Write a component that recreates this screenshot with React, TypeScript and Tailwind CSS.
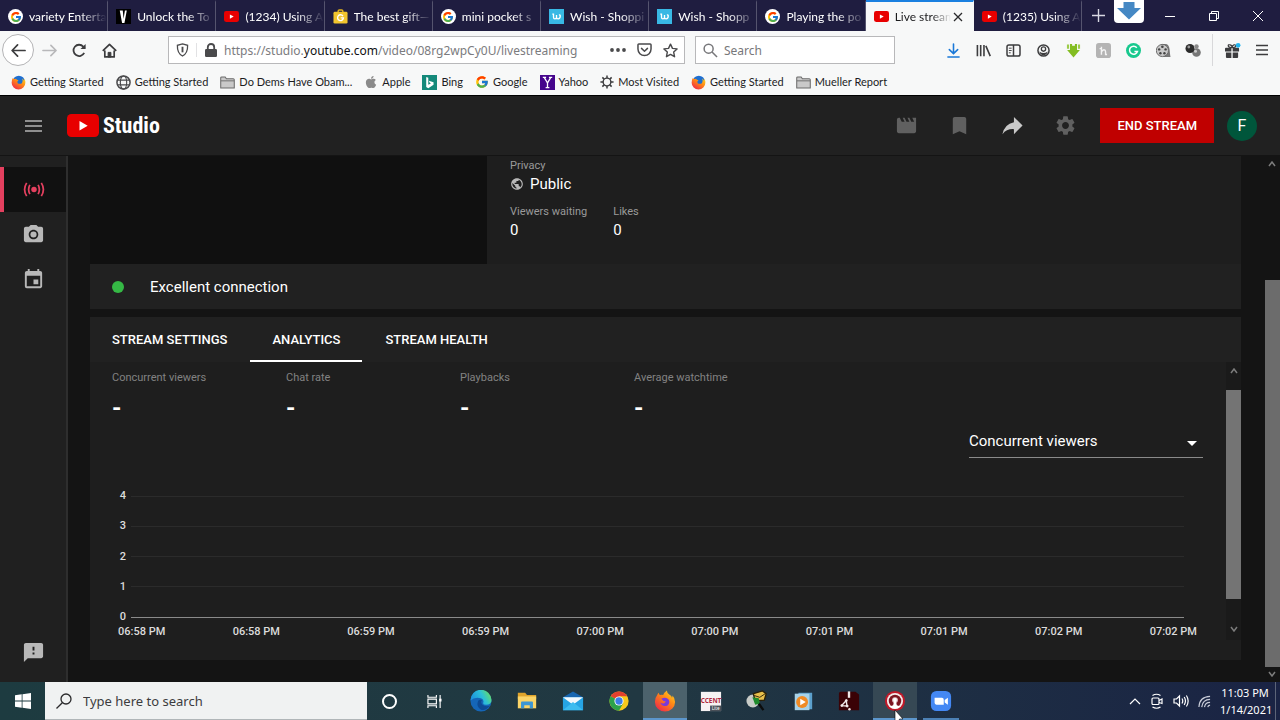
import { useState } from 'react'
import type { ReactNode } from 'react'
import { FcGoogle } from 'react-icons/fc'
import { FaApple } from 'react-icons/fa'
import {
  MdMovie, MdBookmark, MdSettings, MdPhotoCamera, MdEvent, MdFeedback, MdPublic,
} from 'react-icons/md'

/* ---------- small logos ---------- */

function YouTubeIcon({ className }: { className?: string }) {
  return (
    <svg viewBox="0 0 32 23" className={className} aria-hidden="true">
      <rect width="32" height="23" rx="4.500" fill="#e80000" />
      <path d="M12.500 7v9.400l8.200-4.700z" fill="#fff" />
    </svg>
  )
}

function GoogleFavicon() {
  return (
    <span className="flex size-[15px] items-center justify-center rounded-full bg-white">
      <FcGoogle size={12} />
    </span>
  )
}

function VarietyIcon() {
  return (
    <svg viewBox="0 0 16 16" className="size-[15px]" aria-hidden="true">
      <rect width="16" height="16" fill="#000" />
      <path d="M4 1.500h3.200l.9 9L9.500 1.500h2L9 15H6.500z" fill="#fff" />
    </svg>
  )
}

function ShoppingIcon() {
  return (
    <svg viewBox="0 0 16 16" className="size-[15px]" aria-hidden="true">
      <path d="M5.500 4V2.200Q5.500 1 6.800 1h2.400q1.300 0 1.300 1.200V4" fill="none" stroke="#e2b41c" strokeWidth="1.500" />
      <rect x=".5" y="3" width="15" height="12.500" rx="1.500" fill="#f2c52e" />
      <path d="M10.600 7.600A3.100 3.100 0 1 0 11.100 9.500H8.200" fill="none" stroke="#fff" strokeWidth="1.500" />
    </svg>
  )
}

function WishIcon() {
  return (
    <svg viewBox="0 0 16 16" className="size-[15px]" aria-hidden="true">
      <rect width="16" height="16" fill="#38b8e4" />
      <path d="M3.500 5.500h1.300v3.300q0 1.700 1.500 1.700T8 8.800V6.500v2.300q0 1.700 1.700 1.700 2.300 0 2.300-3Q12 6 10.600 6.500" fill="none" stroke="#fff" strokeWidth="1.400" />
    </svg>
  )
}

function FirefoxIcon({ className, modern }: { className?: string; modern?: boolean }) {
  return (
    <svg viewBox="0 0 24 24" className={className} aria-hidden="true">
      <defs>
        <linearGradient id="fx" x1="1" y1="0" x2="0.200" y2="1">
          <stop offset="0" stopColor="#ffe226" />
          <stop offset="0.450" stopColor="#ff8a16" />
          <stop offset="1" stopColor="#f0264a" />
        </linearGradient>
      </defs>
      {!modern && <circle cx="12.500" cy="10.500" r="9.500" fill="#1f6fd0" />}
      {modern ? (
        <path
          d="M3.500 5.500Q4 3.800 5.200 3q.1 1.600 1.200 2.500Q8.500 4.800 10 5.500q1-2.800 4-5 .2 3 3 4.800 2.400 1.300 2.600 3.200.7-.8.600-2.500Q23 9 23 13a11 10.500 0 0 1-22 0Q1 8.500 3.500 5.500z"
          fill="url(#fx)"
        />
      ) : (
        <path
          d="M2.500 5l2.800 1.500Q8 5.500 9.500 7.500L12 8.500l-2 2.300 1 2.700q3.500 1.500 6.500-.5 2-3 .5-7.500Q20 7 20.500 9q.8-1.500.5-3.500 2 3 2 7a11 10.500 0 0 1-22 0Q1 8 2.500 5z"
          fill="url(#fx)"
        />
      )}
      {modern && (
        <path
          d="M8 9.500q3-1.800 5.500-.8 3.500 1.300 3.200 4.800-.8 4-5 4-3.700-.3-4.700-3.500 2.500 1.500 4.500.2l1.500-1.600q-2.800.2-5-3.100z"
          fill="#7a3ad8"
        />
      )}
    </svg>
  )
}

function GlobeIcon() {
  return (
    <svg viewBox="0 0 16 16" className="size-[15px]" fill="none" stroke="#4a4a4c" strokeWidth="1.200" aria-hidden="true">
      <circle cx="8" cy="8" r="7" strokeWidth="1.600" />
      <ellipse cx="8" cy="8" rx="3.400" ry="7" />
      <path d="M1.500 5.500h13M1.500 10.500h13" />
    </svg>
  )
}

function FolderIcon() {
  return (
    <svg viewBox="0 0 16 14" className="h-[13px] w-[15px]" aria-hidden="true">
      <path d="M.7 13V2.200Q.7 1 1.800 1h3.700l1.300 2h7.400q1.100 0 1.100 1.100V13z" fill="#c9c9c9" stroke="#6b6b6b" strokeWidth="1.100" />
      <path d="M1 5.200h14" stroke="#6b6b6b" />
    </svg>
  )
}

function BingIcon() {
  return (
    <svg viewBox="0 0 16 16" className="size-[15px]" aria-hidden="true">
      <rect width="16" height="16" fill="#14897a" />
      <path d="M4.500 2l2.200.8v7.700l2.800-1.500-1.300-.8-.9-2.200 5 1.800v2.600L6.700 14l-2.200-1.300z" fill="#fff" />
    </svg>
  )
}

function YahooIcon() {
  return (
    <svg viewBox="0 0 16 16" className="size-[15px]" aria-hidden="true">
      <rect width="16" height="16" fill="#45058c" />
      <path d="M3 2.500h3.500M9.500 2.500H13M4.500 2.500L8 8.500l3.500-6M8 8.500v5M6 13.500h4" fill="none" stroke="#fff" strokeWidth="1.400" />
    </svg>
  )
}

function SunGearIcon() {
  return (
    <svg viewBox="0 0 16 16" className="size-[14px]" fill="none" stroke="#3c3c3e" aria-hidden="true">
      <circle cx="8" cy="8" r="4.400" strokeWidth="1.600" />
      <path d="M8 .5v3M8 12.500v3M.5 8h3M12.500 8h3M2.700 2.700l2 2M11.300 11.300l2 2M13.300 2.700l-2 2M4.700 11.300l-2 2" strokeWidth="1.700" />
    </svg>
  )
}

/* ---------- browser chrome ---------- */

interface Tab {
  icon: ReactNode
  title: string
}

const youtubeFavicon = <YouTubeIcon className="h-[11px] w-[15px]" />

const browserTabs: Tab[] = [
  { icon: <GoogleFavicon />, title: 'variety Enterta' },
  { icon: <VarietyIcon />,   title: 'Unlock the To' },
  { icon: youtubeFavicon,    title: '(1234) Using A' },
  { icon: <ShoppingIcon />,  title: 'The best gift—' },
  { icon: <GoogleFavicon />, title: 'mini pocket s' },
  { icon: <WishIcon />,      title: 'Wish - Shoppi' },
  { icon: <WishIcon />,      title: 'Wish - Shopp' },
  { icon: <GoogleFavicon />, title: 'Playing the po' },
  { icon: youtubeFavicon,    title: 'Live stream' },
  { icon: youtubeFavicon,    title: '(1235) Using A' },
]

function TabStrip() {
  const active = 8
  return (
    <div className="flex h-[31px] bg-[#1f1d40] text-white">
      <div className="flex min-w-0 flex-1">
        {browserTabs.map((tab, i) => (
          <div
            key={i}
            className={`flex min-w-0 flex-1 items-center gap-1.5 border-r pl-2 ${
              i === active
                ? 'border-t-2 border-t-[#1a80e0] border-r-transparent bg-[#f7f8f8] text-[#1c1c1e]'
                : 'border-t-2 border-t-transparent border-r-[#55546e]'
            }`}
          >
            <span className="shrink-0">{tab.icon}</span>
            <button className="min-w-0 flex-1 text-left text-[12px] leading-4 whitespace-nowrap [mask-image:linear-gradient(to_right,#000_65%,transparent)]">
              {tab.title}
            </button>
            {i === active && (
              <button aria-label="Close tab" className="mr-2.5 -ml-1 shrink-0">
                <svg viewBox="0 0 10 10" className="size-[10px]" stroke="#2a2a2c" strokeWidth="1.300">
                  <path d="M1 1l8 8M9 1L1 9" />
                </svg>
              </button>
            )}
          </div>
        ))}
      </div>
      <div className="flex w-[198px] shrink-0">
        <button aria-label="New tab" className="flex w-8 items-center justify-center">
          <svg viewBox="0 0 14 14" className="size-[13px]" stroke="#d8d8e2" strokeWidth="1.500">
            <path d="M7 0v14M0 7h14" />
          </svg>
        </button>
        <button aria-label="Download video" className="flex h-[23px] w-[30px] items-start justify-center rounded-b bg-white">
          <svg viewBox="0 0 24 20" className="h-[20px] w-[24px]">
            <path d="M6.500 2h11v6H24L12 19.500 0 8h6.500z" fill="#4588c4" />
          </svg>
        </button>
        <div className="flex flex-1 items-center justify-around pl-1">
          <button aria-label="Minimize">
            <svg viewBox="0 0 10 10" className="size-[10px]" stroke="#fff"><path d="M0 5.500h10" /></svg>
          </button>
          <button aria-label="Restore">
            <svg viewBox="0 0 10 10" className="size-[10px]" fill="none" stroke="#fff">
              <path d="M.5 2.500h7v7h-7zM2.500 2.500v-2h7v7h-2" />
            </svg>
          </button>
          <button aria-label="Close window">
            <svg viewBox="0 0 10 10" className="size-[10px]" stroke="#fff"><path d="M0 0l10 10M10 0L0 10" /></svg>
          </button>
        </div>
      </div>
    </div>
  )
}

function ToolbarButton({ label, children }: { label: string; children: ReactNode }) {
  return (
    <button aria-label={label} className="flex w-[30px] shrink-0 items-center justify-center">
      {children}
    </button>
  )
}

function NavToolbar() {
  return (
    <div className="flex h-[38px] items-center bg-[#f7f8f8] px-0.5 font-['Noto_Sans',sans-serif] text-[#3c3c3e]">
      <button aria-label="Back" className="flex size-8 shrink-0 items-center justify-center rounded-full border border-[#b4b4b6] bg-white">
        <svg viewBox="0 0 16 16" className="size-[15px]" fill="none" stroke="currentColor" strokeWidth="1.800" strokeLinecap="round" strokeLinejoin="round">
          <path d="M15 8H1.500M7 2L1.200 8 7 14" />
        </svg>
      </button>
      <ToolbarButton label="Forward">
        <svg viewBox="0 0 16 16" className="size-[15px]" fill="none" stroke="#b8b8ba" strokeWidth="1.700" strokeLinecap="round" strokeLinejoin="round">
          <path d="M1 8h13.500M9.500 2.500L15 8l-5.500 5.500" />
        </svg>
      </ToolbarButton>
      <ToolbarButton label="Reload">
        <svg viewBox="0 0 16 16" className="size-[15px]" fill="none" stroke="currentColor" strokeWidth="1.900">
          <path d="M13 10.500A6 6 0 1 1 12 3.800l1.500 1.500" />
          <path d="M14.500 1v5.500H9z" fill="currentColor" stroke="none" />
        </svg>
      </ToolbarButton>
      <ToolbarButton label="Home">
        <svg viewBox="0 0 16 16" className="size-[15px]" fill="none" stroke="currentColor" strokeWidth="1.800" strokeLinejoin="round">
          <path d="M.8 8.500L8 1.500l7.200 7M3 8v6.800h10V8" />
          <path d="M6.500 15v-5h3v5z" fill="currentColor" strokeWidth="1" />
        </svg>
      </ToolbarButton>

      <div className="ml-11 flex h-7 flex-1 items-center border border-[#b8b8ba] bg-white pr-1.5">
        <button aria-label="Tracking protection" className="flex w-7 justify-center border-r border-[#e2e2e4]">
          <svg viewBox="0 0 14 15" className="h-[14px] w-[13px]" fill="none" stroke="#4a4a4c" strokeWidth="1.400">
            <path d="M7 1l5.500 1.500q.3 8.500-5.500 11.500-5.800-3-5.500-11.500z" />
            <path d="M7 4v6" strokeWidth="2" />
          </svg>
        </button>
        <button aria-label="Site information" className="flex w-[27px] justify-center">
          <svg viewBox="0 0 12 14" className="h-[14px] w-[12px]">
            <rect y="6" width="12" height="8" rx="1.200" fill="#4a4a4c" />
            <path d="M2.800 7V4.200a3.200 3.200 0 0 1 6.400 0V7" fill="none" stroke="#4a4a4c" strokeWidth="1.800" />
          </svg>
        </button>
        <div role="textbox" aria-label="Address" tabIndex={0} className="min-w-0 flex-1 truncate pt-0.5 text-[12px] text-[#7b7b7e]">
          https://studio.<span className="text-[#111113]">youtube.com</span>/video/08rg2wpCy0U/livestreaming
        </div>
        <div className="flex items-center gap-[11px]">
          <button aria-label="Page actions">
            <svg viewBox="0 0 16 4" className="h-[4px] w-[16px]" fill="#4a4a4c">
              <circle cx="2" cy="2" r="1.900" /><circle cx="8" cy="2" r="1.900" /><circle cx="14" cy="2" r="1.900" />
            </svg>
          </button>
          <button aria-label="Save to Pocket">
            <svg viewBox="0 0 16 15" className="h-[14px] w-[15px]" fill="none" stroke="#4a4a4c" strokeWidth="1.600" strokeLinecap="round" strokeLinejoin="round">
              <path d="M2 1h12q1 0 1 1v4.500a7 7 0 0 1-14 0V2q0-1 1-1z" />
              <path d="M4.800 5.800L8 8.800l3.200-3" />
            </svg>
          </button>
          <button aria-label="Bookmark this page">
            <svg viewBox="0 0 16 16" className="size-[15px]" fill="none" stroke="#4a4a4c" strokeWidth="1.500" strokeLinejoin="round">
              <path d="M8 1.200l2.100 4.500 4.900.6-3.600 3.400.9 4.900L8 12.200l-4.300 2.400.9-4.900L1 6.300l4.900-.6z" />
            </svg>
          </button>
        </div>
      </div>

      <label className="ml-[10px] flex h-7 w-[200px] items-center gap-1.5 border border-[#b8b8ba] bg-white pl-[7px]">
        <svg viewBox="0 0 16 16" className="size-[15px] shrink-0" fill="none" stroke="#77777a" strokeWidth="1.600">
          <circle cx="6" cy="6" r="4.800" />
          <path d="M9.600 9.600L15 15" />
        </svg>
        <input aria-label="Search" placeholder="Search" className="w-full min-w-0 pt-0.5 text-[12px] outline-none placeholder:text-[#77777a]" />
      </label>

      <div className="ml-[43px] flex items-center">
        <ToolbarButton label="Downloads">
          <svg viewBox="0 0 14 16" className="h-[15px] w-[13px]" fill="none" stroke="#1a78d8" strokeWidth="1.700" strokeLinecap="round">
            <path d="M7 1v10M2.500 7L7 11.300 11.500 7M1 15h12" />
          </svg>
        </ToolbarButton>
        <ToolbarButton label="Library">
          <svg viewBox="0 0 16 16" className="size-[15px]" fill="none" stroke="currentColor" strokeWidth="1.700">
            <path d="M1.500 2v12M5 2v12M8.500 2v12M10.500 3L15.200 14" />
          </svg>
        </ToolbarButton>
        <ToolbarButton label="Sidebars">
          <svg viewBox="0 0 16 14" className="h-[13px] w-[15px]" fill="none" stroke="currentColor" strokeWidth="1.600">
            <rect x="1" y="1" width="14" height="12" rx="2" />
            <path d="M8 1v12" />
            <path d="M3 4.500h3M3 7h3M3 9.500h2" strokeWidth="1" />
          </svg>
        </ToolbarButton>
        <ToolbarButton label="Account">
          <svg viewBox="0 0 14 14" className="size-[13px]" fill="none" stroke="currentColor">
            <circle cx="7" cy="7" r="6" strokeWidth="1.600" />
            <circle cx="7" cy="5.500" r="2.300" strokeWidth="1.400" />
            <path d="M2.500 8q4.500 3.500 9 0-1 4-4.500 4T2.500 8z" fill="currentColor" stroke="none" />
          </svg>
        </ToolbarButton>
        <ToolbarButton label="Video downloader">
          <svg viewBox="0 0 16 16" className="size-[15px]">
            <path d="M4.200 1h2.300v2h3V1h2.300v6.500h3L8 15.500 1.200 7.500h3z" fill="#83bd22" />
            <path d="M1 1.500h2.200v4.500H1zM12.800 1.500H15v4.500h-2.200z" fill="#9ccc4a" />
          </svg>
        </ToolbarButton>
        <ToolbarButton label="Honey">
          <svg viewBox="0 0 16 16" className="size-[15px]">
            <rect width="16" height="16" rx="3" fill="#b4b4b4" />
            <path d="M5.800 12.500V4M5.800 9.500q1.200-2.300 2.700-2.300 1.700 0 1.700 2v3M3.800 6h2.500M9.500 12.300h2.300" fill="none" stroke="#f4f4f4" strokeWidth="1.500" />
          </svg>
        </ToolbarButton>
        <ToolbarButton label="Grammarly">
          <svg viewBox="0 0 16 16" className="size-[15px]">
            <circle cx="8" cy="8" r="8" fill="#18c98e" />
            <path d="M11.500 5A4.300 4.300 0 1 0 12.200 9H9" fill="none" stroke="#fff" strokeWidth="1.600" />
          </svg>
        </ToolbarButton>
        <ToolbarButton label="Video helper">
          <svg viewBox="0 0 16 16" className="size-[15px]">
            <path d="M6 1h4q4 0 4.500 6t1 8H8z" fill="#777" />
            <circle cx="6.800" cy="8" r="6.500" fill="#c8c8c8" stroke="#666" />
            <g fill="#444">
              <circle cx="6.800" cy="4" r="1.400" /><circle cx="3.400" cy="6.800" r="1.300" /><circle cx="10.200" cy="6.800" r="1.300" />
              <circle cx="4.700" cy="11" r="1.300" /><circle cx="9" cy="11" r="1.300" />
            </g>
          </svg>
        </ToolbarButton>
        <ToolbarButton label="Helper add-on">
          <svg viewBox="0 0 16 16" className="size-[16px]">
            <circle cx="11.500" cy="10.500" r="4.300" fill="#777" />
            <circle cx="5" cy="6.500" r="4.500" fill="#2b2b2b" />
            <circle cx="11.500" cy="4.500" r="2.200" fill="#8a8a8a" />
            <circle cx="3.800" cy="5" r="1.400" fill="#999" /><circle cx="10.500" cy="9.200" r="1.500" fill="#ccc" />
          </svg>
        </ToolbarButton>
      </div>
      <div className="ml-1 h-8 w-px bg-[#d8d8da]" />
      <div className="mr-px ml-1 flex items-center">
        <ToolbarButton label="What's new">
          <svg viewBox="0 0 18 16" className="h-[15px] w-[17px]" fill="#3c3c3e">
            <path d="M2 5h5.800v4H1V6q0-1 1-1zM9.200 5H15q1 0 1 1v3H9.200zM2 10.200h5.800V16H3q-1 0-1-1zM9.200 10.200H15V15q0 1-1 1H9.200z" />
            <path d="M8.500 5Q5 5 4.500 3.200T6.500 2t2 3q0-2.500 2-3t2 1.200T8.500 5z" fill="none" stroke="#3c3c3e" strokeWidth="1.300" />
            <circle cx="15" cy="2.500" r="2.500" fill="#22b4ee" />
          </svg>
        </ToolbarButton>
        <ToolbarButton label="Open menu">
          <svg viewBox="0 0 12 12" className="size-[12px]" stroke="currentColor" strokeWidth="1.600">
            <path d="M0 1.500h12M0 6h12M0 10.500h12" />
          </svg>
        </ToolbarButton>
      </div>
    </div>
  )
}

const bookmarks: { icon: ReactNode; label: string }[] = [
  { icon: <FirefoxIcon className="size-[15px]" />, label: 'Getting Started' },
  { icon: <GlobeIcon />,   label: 'Getting Started' },
  { icon: <FolderIcon />,  label: 'Do Dems Have Obam...' },
  { icon: <FaApple size={14} color="#8a8a8a" />, label: 'Apple' },
  { icon: <BingIcon />,    label: 'Bing' },
  { icon: <FcGoogle size={14} />, label: 'Google' },
  { icon: <YahooIcon />,   label: 'Yahoo' },
  { icon: <SunGearIcon />, label: 'Most Visited' },
  { icon: <FirefoxIcon className="size-[15px]" />, label: 'Getting Started' },
  { icon: <FolderIcon />,  label: 'Mueller Report' },
]

function BookmarksBar() {
  return (
    <nav aria-label="Bookmarks" className="flex h-[27px] items-center gap-3 border-b border-black bg-[#f7f8f8] pl-[11px] text-[11px] leading-4 text-[#1c1c1e]">
      {bookmarks.map((b, i) => (
        <a key={i} href="#" className="flex shrink-0 items-center gap-1">
          {b.icon}
          {b.label}
        </a>
      ))}
    </nav>
  )
}

/* ---------- studio ---------- */

function StudioHeader() {
  return (
    <header className="flex h-[60px] items-center border-b border-[#141414] bg-[#212121] pr-[23px] pl-[25px]">
      <button aria-label="Collapse menu">
        <svg viewBox="0 0 17 12" className="h-[12px] w-[17px]" stroke="#b4b4b4" strokeWidth="1.600">
          <path d="M0 1h17M0 6h17M0 11h17" />
        </svg>
      </button>
      <a href="#" className="ml-[25px] flex items-center gap-1 text-white">
        <YouTubeIcon className="h-[23px] w-[32px]" />
        <span className="font-['Roboto_Condensed','Liberation_Sans_Narrow',sans-serif] text-[22px] leading-7 font-bold">Studio</span>
      </a>
      <div className="ml-auto flex items-center gap-[30px] text-[#606060]">
        <button aria-label="Highlights"><MdMovie size={23} /></button>
        <button aria-label="Stream marker"><MdBookmark size={23} /></button>
        <button aria-label="Share">
          <svg viewBox="0 0 24 24" className="size-[23px]" fill="#c8c8c8">
            <path d="M13.500 3L22.500 12l-9 9v-5.200Q6 15.300 1.500 21q2-10.500 12-12.500z" />
          </svg>
        </button>
        <button aria-label="Settings"><MdSettings size={23} /></button>
      </div>
      <button className="ml-[23px] h-[35px] bg-[#c00000] px-[17px] text-[13px] font-medium text-white">END STREAM</button>
      <button aria-label="Account" className="ml-[13px] size-[30px] rounded-full bg-[#00563b] text-[16px] text-white">F</button>
    </header>
  )
}

function StudioSidebar() {
  return (
    <nav aria-label="Studio" className="flex w-[68px] shrink-0 flex-col border-r-2 border-[#2e2e2e] bg-[#202020] pt-[11px] text-[#b8b8b8]">
      <a href="#" aria-label="Stream" className="flex h-[45px] items-center justify-center border-l-4 border-[#e4405f] bg-[#111] pr-[3px] text-[#e4405f]">
        <svg viewBox="0 0 24 16" className="h-[15px] w-[22px]" fill="none" stroke="currentColor" strokeWidth="1.900">
          <circle cx="12" cy="8" r="3" fill="currentColor" stroke="none" />
          <path d="M7.500 3Q4.800 8 7.500 13M16.500 3Q19.200 8 16.500 13M4 .8Q-.5 8 4 15.200M20 .8Q24.500 8 20 15.200" />
        </svg>
      </a>
      <a href="#" aria-label="Webcam" className="flex h-[45px] items-center justify-center"><MdPhotoCamera size={23} /></a>
      <a href="#" aria-label="Manage" className="flex h-[45px] items-center justify-center"><MdEvent size={23} /></a>
      <a href="#" aria-label="Send feedback" className="mt-auto mb-[7px] flex h-[45px] items-center justify-center"><MdFeedback size={23} /></a>
    </nav>
  )
}

function Arrow({ up }: { up?: boolean }) {
  return (
    <svg viewBox="0 0 8 6" className="h-[6px] w-[8px] shrink-0" fill="none" stroke="#7c7c7c" strokeWidth="1.500">
      <path d={up ? 'M1 5l3-4 3 4' : 'M1 1l3 4 3-4'} />
    </svg>
  )
}

function StreamCard() {
  return (
    <section className="bg-[#1e1e1e] text-white">
      <div className="flex h-[108px]">
        <div className="w-[397px] shrink-0 bg-[#101010]" />
        <div className="flex flex-col px-[23px]">
          <div className="pt-0.5 text-[11px] leading-4 text-[#9a9a9a]">Privacy</div>
          <div className="flex items-center gap-1.5 text-[15px] leading-5">
            <MdPublic size={14} color="#b8b8b8" />
            Public
          </div>
          <div className="mt-[10px] flex gap-[26px]">
            <div>
              <div className="text-[11px] leading-4 text-[#9a9a9a]">Viewers waiting</div>
              <div className="text-[15px] leading-5">0</div>
            </div>
            <div>
              <div className="text-[11px] leading-4 text-[#9a9a9a]">Likes</div>
              <div className="text-[15px] leading-5">0</div>
            </div>
          </div>
        </div>
      </div>
      <div className="flex h-[45px] items-center gap-[26px] bg-[#212121] pt-px pl-[22px] text-[15px]">
        <span className="size-3 rounded-full bg-[#35b845]" />
        Excellent connection
      </div>
    </section>
  )
}

const studioTabs = ['STREAM SETTINGS', 'ANALYTICS', 'STREAM HEALTH']
const metrics = ['Concurrent viewers', 'Chat rate', 'Playbacks', 'Average watchtime']
const yTicks = [4, 3, 2, 1, 0]
const xTicks = [
  '06:58 PM', '06:58 PM', '06:59 PM', '06:59 PM', '07:00 PM',
  '07:00 PM', '07:01 PM', '07:01 PM', '07:02 PM', '07:02 PM',
]

function Chart() {
  return (
    <div className="pr-[29px] pl-7 text-[11px] leading-4 font-medium text-[#dcdcdc]">
      <div className="flex h-[137px] flex-col justify-between">
        {yTicks.map(v => (
          <div key={v} className="flex items-center gap-[5px] pr-[13px]">
            <span className="w-2 text-right">{v}</span>
            <span className={`h-px flex-1 ${v === 0 ? 'bg-[#8a8a8a]' : 'bg-[#2b2b2b]'}`} />
          </div>
        ))}
      </div>
      <div className="-mt-px flex justify-between">
        {xTicks.map((t, i) => <span key={i}>{t}</span>)}
      </div>
    </div>
  )
}

function AnalyticsCard() {
  const [tab, setTab] = useState('ANALYTICS')
  const [metric, setMetric] = useState('Concurrent viewers')

  return (
    <section className="bg-[#1e1e1e] text-white">
      <div role="tablist" className="flex h-[45px] gap-px bg-[#212121]">
        {studioTabs.map(name => (
          <button
            key={name}
            role="tab"
            aria-selected={name === tab}
            onClick={() => setTab(name)}
            className={`border-b-2 px-[22px] pt-0.5 text-[13px] font-medium ${
              name === tab ? 'border-white' : 'border-transparent'
            }`}
          >
            {name}
          </button>
        ))}
      </div>
      <div className="flex">
        <div className="min-w-0 flex-1">
          <div className="flex pt-2 pl-[22px]">
            {metrics.map(m => (
              <div key={m} className="w-[174px]">
                <div className="text-[11px] leading-4 text-[#828282]">{m}</div>
                <div className="mt-[10px] text-[24px] leading-6 font-bold">-</div>
              </div>
            ))}
          </div>
          <div className="mt-1 mb-[30px] flex justify-end pr-[23px]">
            <div className="relative w-[234px]">
              <select
                aria-label="Chart metric"
                value={metric}
                onChange={e => setMetric(e.target.value)}
                className="h-[34px] w-full appearance-none border-b border-[#8a8a8a] bg-transparent pt-0.5 text-[15px] outline-none"
              >
                {metrics.map(m => <option key={m}>{m}</option>)}
              </select>
              <svg viewBox="0 0 10 5" className="pointer-events-none absolute top-[17px] right-[6px] h-[5px] w-[10px]" fill="#fff">
                <path d="M0 0h10L5 5z" />
              </svg>
            </div>
          </div>
          <Chart />
        </div>
        <div className="flex w-[15px] shrink-0 flex-col items-center self-stretch bg-[#1a1a1a] pt-[6px]">
          <Arrow up />
          <div className="mt-4 w-full flex-1 bg-[#747474]" />
          <div className="pt-[27px] pb-2"><Arrow /></div>
        </div>
      </div>
      <div className="h-5" />
    </section>
  )
}

function PageScrollbar() {
  return (
    <div className="flex w-4 shrink-0 flex-col items-center py-[5px]">
      <Arrow up />
      <div className="flex-[113]" />
      <div className="mb-1 w-[15px] flex-[387] bg-[#6c6c6c]" />
      <Arrow />
    </div>
  )
}

/* ---------- taskbar ---------- */

const taskbarApps: { name: string; state?: 'active' | 'running'; art: ReactNode }[] = [
  {
    name: 'Edge',
    art: (
      <>
        <defs>
          <linearGradient id="edge" x1="0" y1="0.600" x2="1" y2="0.200">
            <stop offset="0" stopColor="#1b8ede" /><stop offset="0.550" stopColor="#2cc0d8" /><stop offset="1" stopColor="#6ee05a" />
          </linearGradient>
        </defs>
        <circle cx="12" cy="12" r="11.500" fill="#1566b8" />
        <path d="M.5 11.500A11.500 11.500 0 0 1 23.500 11q0 5-6 5.200-4 0-3-2.700Q15.500 10.500 12 9 5 7 .5 11.500z" fill="url(#edge)" />
        <path d="M8.800 12q1.300-2 4.200-1-1.700 2.200 0 4.500 3 3 8.700 1.700Q17 23 12 21.500 6.500 18 8.800 12z" fill="#0d4a94" />
      </>
    ),
  },
  {
    name: 'File Explorer',
    art: (
      <>
        <path d="M2 3h8l2 2.500h10V10H2z" fill="#e0a52c" />
        <path d="M2 7h20v13H2z" fill="#fbd568" />
        <path d="M5.500 20v-6.500q0-1 1-1h11q1 0 1 1V20H15v-3.500H9V20z" fill="#3c96d4" />
      </>
    ),
  },
  {
    name: 'Mail',
    art: (
      <>
        <path d="M1 8L12 1.500 23 8v4H1z" fill="#1766b0" />
        <path d="M1 8h22v14H1z" fill="#26a4e4" />
        <path d="M1 8h22l-11 8z" fill="#f2f8fc" />
        <path d="M1 22l11-9 11 9z" fill="#3cbcf0" />
      </>
    ),
  },
  {
    name: 'Chrome',
    art: (
      <>
        <circle cx="12" cy="12" r="10.500" fill="#f8c91c" />
        <path d="M12 12L2.900 6.800A10.500 10.500 0 0 1 21.100 6.800H12z" fill="#e2402f" />
        <path d="M12 12L2.900 6.800A10.500 10.500 0 0 0 12 22.500l4.500-8z" fill="#2ca24c" />
        <circle cx="12" cy="12" r="5" fill="#fff" />
        <circle cx="12" cy="12" r="4" fill="#3c7ee8" />
      </>
    ),
  },
  { name: 'Firefox', state: 'active', art: <FirefoxIcon modern /> },
  {
    name: 'CCENT Lite',
    art: (
      <>
        <rect x="1" y="2" width="22" height="21" fill="#f6f2f2" />
        <text x="12" y="14" textAnchor="middle" fontSize="7" fontWeight="700" fill="#b02840">CCENT</text>
        <rect x="11" y="17" width="12" height="6" fill="#4a5058" />
        <text x="17" y="22" textAnchor="middle" fontSize="5" fill="#fff">Lite</text>
      </>
    ),
  },
  {
    name: 'Mail scanner',
    art: (
      <>
        <circle cx="7.500" cy="12" r="7" fill="#c8ccc8" />
        <path d="M8 4l10-3 4 3-2 7-10 1z" fill="#e8c04c" stroke="#2b2108" strokeWidth="1.500" />
        <path d="M9 6l6 2 6-4" fill="none" stroke="#2b2108" />
        <path d="M7 8l7 1 1 6-5 1z" fill="#1f8a2c" />
        <path d="M14 15l5 7" stroke="#0c0c0c" strokeWidth="2.500" />
      </>
    ),
  },
  {
    name: 'Media Player',
    art: (
      <>
        <rect x="7" y="3" width="15" height="18" fill="#5ca0cc" />
        <rect x="3" y="4" width="16" height="18" fill="#a8d2e8" />
        <circle cx="11" cy="13" r="6.500" fill="#f08a24" />
        <path d="M9 9.500v7l6-3.500z" fill="#fff" />
      </>
    ),
  },
  {
    name: 'Network tool',
    art: (
      <>
        <path d="M1 4q0-2 2-2h16l4 3v17H1z" fill="#3a0206" />
        <path d="M12 1.500v7" stroke="#f0e8e8" strokeWidth="2.600" />
        <path d="M4 17l5-5.500.8 6M4 17l6 .5" fill="none" stroke="#f0e8e8" strokeWidth="1.500" />
        <g fill="#f0e8e8">
          <circle cx="4.200" cy="17" r="1.500" /><circle cx="9" cy="11.500" r="1.500" /><circle cx="10" cy="17.500" r="1.500" /><circle cx="12.500" cy="21" r="1.300" />
        </g>
      </>
    ),
  },
  {
    name: 'Screen recorder',
    state: 'running',
    art: (
      <>
        <circle cx="12" cy="12" r="11" fill="#c01828" />
        <circle cx="12" cy="12" r="8.800" fill="#f4eaea" />
        <circle cx="12" cy="12" r="6.800" fill="#7c1420" />
        <circle cx="12" cy="11" r="3.200" fill="#e8c8cc" />
        <circle cx="12" cy="10.800" r="2" fill="#fff" />
        <path d="M11 12h2l1 4.500 4 1.500q-6 5-12 0l4-1.500z" fill="#fff" />
      </>
    ),
  },
  {
    name: 'Zoom',
    art: (
      <>
        <rect x="1" y="1" width="22" height="22" rx="6" fill="#4488f4" />
        <path d="M5 8.500h8q2 0 2 2V16H7q-2 0-2-2zM16 11l3.500-2.500V16L16 13.500z" fill="#fff" />
      </>
    ),
  },
]

function Taskbar() {
  return (
    <footer className="flex h-[38px] items-stretch bg-linear-to-r from-[#1d3b40] via-[#213842] to-[#1a2344] font-['Noto_Sans',sans-serif] text-white">
      <button aria-label="Start" className="flex w-[45px] shrink-0 items-center justify-center">
        <svg viewBox="0 0 16 16" className="size-[16px]" fill="#fff">
          <path d="M0 2.300L6.700 1.300v6.300H0zM7.500 1.200L16 0v7.600H7.500zM0 8.400h6.700v6.300L0 13.700zM7.500 8.400H16V16l-8.500-1.200z" />
        </svg>
      </button>
      <label className="flex w-[322px] shrink-0 items-center gap-[11px] border-b border-[#b0b6b8] bg-[#f0f2f2] pl-[11px]">
        <svg viewBox="0 0 16 16" className="size-[16px] shrink-0" fill="none" stroke="#2a2a2c" strokeWidth="1.300">
          <circle cx="10" cy="6" r="5" />
          <path d="M6.300 9.700L.5 15.500" />
        </svg>
        <input aria-label="Type here to search" placeholder="Type here to search" className="w-full min-w-0 pt-0.5 text-[13px] outline-none placeholder:text-[#3c3c3e]" />
      </label>
      <button aria-label="Cortana" className="flex w-[45px] shrink-0 items-center justify-center">
        <span className="size-[15px] rounded-full border-2 border-white" />
      </button>
      <button aria-label="Task view" className="mr-px flex w-[45px] shrink-0 items-center justify-center">
        <svg viewBox="0 0 16 16" className="size-[15px]" fill="none" stroke="#fff" strokeWidth="1.200">
          <path d="M1 1v2.500h9V1M1 15v-2.500h9V15M1 5.500h9v5H1zM14 1v14" />
          <path d="M13 5h2.500v3H13z" fill="#fff" stroke="none" />
        </svg>
      </button>
      {taskbarApps.map(app => (
        <button
          key={app.name}
          aria-label={app.name}
          className={`relative mx-px flex w-[44px] shrink-0 items-center justify-center ${
            app.state === 'active'
              ? 'bg-[#4c626c] shadow-[inset_0_-2px_#5c96cc]'
              : app.state === 'running' ? 'bg-[#364854] shadow-[inset_0_-2px_#5c96cc]' : ''
          }`}
        >
          <svg viewBox="0 0 24 24" className="size-[22px]">{app.art}</svg>
          {app.name === 'Zoom' && <span className="absolute bottom-0 left-1 h-0.5 w-9 bg-[#4c80b4]" />}
          {app.state === 'running' && (
            <svg viewBox="0 0 10 14" className="absolute bottom-[-4px] left-[21px] h-[14px] w-[10px]">
              <path d="M1 0l8 9H5.500L4 14 1 11z" fill="#fff" stroke="#000" strokeWidth=".6" />
            </svg>
          )}
        </button>
      ))}
      <div className="ml-auto flex items-center gap-[9px]">
        <button aria-label="Show hidden icons">
          <svg viewBox="0 0 12 7" className="h-[7px] w-[12px]" fill="none" stroke="#fff" strokeWidth="1.200"><path d="M1 6l5-5 5 5" /></svg>
        </button>
        <button aria-label="Meet now">
          <svg viewBox="0 0 14 16" className="h-[16px] w-[14px]" fill="none" stroke="#fff" strokeWidth="1.200">
            <rect x="2" y="5" width="7" height="6.500" rx="1" />
            <path d="M9 7.500l3-1.500v4.500L9 9.500M2.500 2.500q4-2.500 8 0M2.500 14q4 2.500 8 0" />
          </svg>
        </button>
        <button aria-label="Volume">
          <svg viewBox="0 0 16 14" className="h-[14px] w-[16px]" fill="none" stroke="#fff" strokeWidth="1.200">
            <path d="M1 5h2.500l3-3v10l-3-3H1zM9 4.500q1.500 2.500 0 5M11.200 3q2.500 4 0 8M13.400 1.500q3.500 5.500 0 11" />
          </svg>
        </button>
        <button aria-label="Network">
          <svg viewBox="0 0 14 14" className="size-[13px]" fill="none" stroke="#c8ccd8" strokeWidth="1.300">
            <path d="M1 13Q1.500 2 13 1.500M4 13Q5 5 13 4.800M7 13q.8-5 6-5M10.500 13q.3-1.800 2.500-2" />
          </svg>
        </button>
        <div className="w-[50px] text-center text-[11px] leading-[17px]">
          <div className="whitespace-nowrap">11:03 PM</div>
          <div className="whitespace-nowrap">1/14/2021</div>
        </div>
        <span className="mr-1 -ml-1 h-[38px] w-px bg-[#5c6478]" />
      </div>
    </footer>
  )
}

export default function App() {
  return (
    <div className="flex min-h-screen flex-col overflow-hidden bg-[#141414] font-[Roboto,'Liberation_Sans',sans-serif]">
      <div className="font-[Lato,sans-serif]">
        <TabStrip />
        <NavToolbar />
        <BookmarksBar />
      </div>
      <StudioHeader />
      <div className="flex flex-1">
        <StudioSidebar />
        <main className="flex min-w-0 flex-1 flex-col gap-2 pr-[23px] pl-[22px]">
          <StreamCard />
          <AnalyticsCard />
        </main>
        <PageScrollbar />
      </div>
      <Taskbar />
    </div>
  )
}
